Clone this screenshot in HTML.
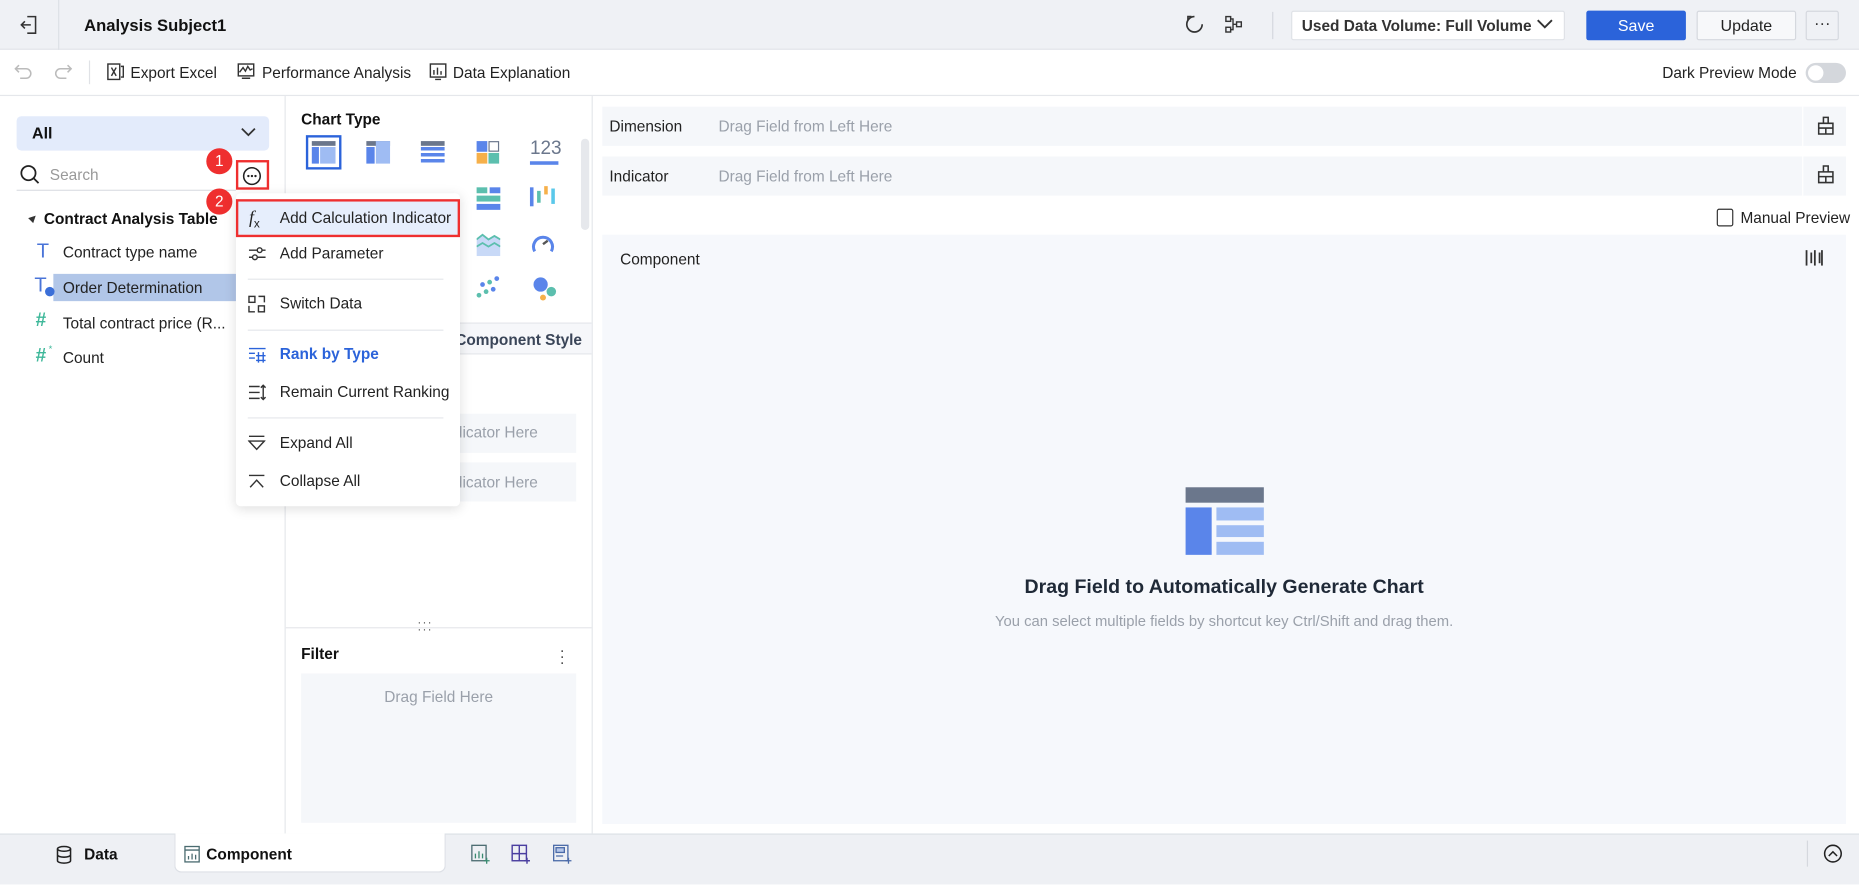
<!DOCTYPE html>
<html><head><meta charset="utf-8"><style>
*{box-sizing:border-box;margin:0;padding:0}
html,body{width:1859px;height:885px;overflow:hidden;background:#fff}
#w{width:1568px;height:746px;transform:scale(1.18559);transform-origin:0 0;position:relative;font-family:"Liberation Sans",sans-serif;font-size:13px;color:#1f2937}
.a{position:absolute}
.mi{position:absolute;left:0;width:189px;height:30px;line-height:30px;padding-left:37px;font-size:13px;color:#222}
.mi svg{position:absolute;left:10px;top:8px}
.sep{position:absolute;left:10px;width:165px;height:1px;background:#e5e7eb}
.fl{position:absolute;left:30px;font-size:13px;color:#222}
</style></head><body><div id="w">
<div class="a" style="left:0;top:0;width:1568px;height:42px;background:#eff1f5;border-bottom:1px solid #e2e5ea"></div>
<div class="a" style="left:49px;top:0;width:1px;height:42px;background:#dde0e6"></div>
<svg class="a" style="left:16px;top:12px" width="18" height="18" viewBox="0 0 18 18" fill="none" stroke="#333" stroke-width="1.3"><path d="M7 2h7v14H7M2 9h8M5 6l-3 3 3 3"/></svg>
<div class="a" style="left:71px;top:13px;font-weight:bold;font-size:14px;color:#111">Analysis Subject1</div>
<svg class="a" style="left:999px;top:12px" width="17" height="17" viewBox="0 0 17 17" fill="none" stroke="#333" stroke-width="1.4"><path d="M8.5 2a6.5 6.5 0 1 0 6.5 6.5"/><path d="M3 5l0-3 3 0"/></svg>
<svg class="a" style="left:1033px;top:13px" width="16" height="15" viewBox="0 0 16 15" fill="none" stroke="#333" stroke-width="1.2"><rect x="1" y="1" width="4" height="4"/><rect x="1" y="10" width="4" height="4"/><rect x="10" y="5.5" width="4" height="4"/><path d="M5 3h2v9H5M7 7.5h3"/></svg>
<div class="a" style="left:1073px;top:10px;width:1px;height:23px;background:#d5d8de"></div>
<div class="a" style="left:1089px;top:9px;width:231px;height:25px;background:#fff;border:1px solid #dfe2e7;border-radius:2px;font-size:13px;line-height:23px;padding-left:8px;color:#333;font-weight:bold">Used Data Volume: Full Volume</div>
<svg class="a" style="left:1296px;top:15px" width="14" height="10" viewBox="0 0 14 10" fill="none" stroke="#333" stroke-width="1.6"><path d="M1 2l6 6 6-6"/></svg>
<div class="a" style="left:1338px;top:9px;width:84px;height:25px;background:#2b63da;border-radius:2px;color:#fff;text-align:center;line-height:25px;font-size:13.5px">Save</div>
<div class="a" style="left:1431px;top:9px;width:84px;height:25px;background:#f7f8fa;border:1px solid #d5d8de;border-radius:2px;text-align:center;line-height:23px;font-size:13.5px;color:#222">Update</div>
<div class="a" style="left:1523px;top:9px;width:28px;height:25px;border:1px solid #d5d8de;border-radius:2px;text-align:center;line-height:18px;font-size:14px;color:#333">···</div>
<div class="a" style="left:0;top:80px;width:1568px;height:1px;background:#e5e7eb"></div>
<svg class="a" style="left:12px;top:53px" width="16" height="14" viewBox="0 0 16 14" fill="none" stroke="#bbb" stroke-width="1.3"><path d="M4 2L1 5l3 3M1 5h9a4 4 0 0 1 0 8H5"/></svg>
<svg class="a" style="left:45px;top:53px" width="16" height="14" viewBox="0 0 16 14" fill="none" stroke="#bbb" stroke-width="1.3"><path d="M12 2l3 3-3 3M15 5H6a4 4 0 0 0 0 8h5"/></svg>
<div class="a" style="left:75px;top:51px;width:1px;height:20px;background:#e0e2e6"></div>
<svg class="a" style="left:90px;top:53px" width="15" height="15" viewBox="0 0 15 15" fill="none" stroke="#333" stroke-width="1.2"><rect x="1" y="1" width="10" height="13"/><path d="M12 3h2v9h-2M4 4l4 7M8 4l-4 7"/></svg>
<div class="a" style="left:110px;top:54px;font-size:13px;color:#222">Export Excel</div>
<svg class="a" style="left:200px;top:53px" width="15" height="14" viewBox="0 0 15 14" fill="none" stroke="#333" stroke-width="1.2"><rect x="1" y="1" width="13" height="10"/><path d="M2 8l3-4 2 3 2-4 2 3 2-1M4 13h7"/></svg>
<div class="a" style="left:221px;top:54px;font-size:13px;color:#222">Performance Analysis</div>
<svg class="a" style="left:362px;top:53px" width="15" height="15" viewBox="0 0 15 15" fill="none" stroke="#333" stroke-width="1.2"><rect x="1" y="1" width="13" height="11"/><path d="M4 10V6M7 10V4M10 10V7M5 14h5"/></svg>
<div class="a" style="left:382px;top:54px;font-size:13px;color:#222">Data Explanation</div>
<div class="a" style="left:1402px;top:54px;font-size:13px;color:#222">Dark Preview Mode</div>
<div class="a" style="left:1523px;top:53px;width:34px;height:17px;border-radius:9px;background:#d4d7dc"></div>
<div class="a" style="left:1525px;top:55px;width:13px;height:13px;border-radius:50%;background:#fff"></div>
<div class="a" style="left:240px;top:81px;width:1px;height:622px;background:#e5e7eb"></div>
<div class="a" style="left:14px;top:98px;width:213px;height:29px;background:#e3ebfb;border-radius:4px;font-weight:bold;font-size:13.5px;line-height:29px;padding-left:13px;color:#111">All</div>
<svg class="a" style="left:203px;top:107px" width="13" height="9" viewBox="0 0 13 9" fill="none" stroke="#333" stroke-width="1.5"><path d="M1 1.5l5.5 5.5 5.5-5.5"/></svg>
<svg class="a" style="left:17px;top:139px" width="17" height="17" viewBox="0 0 17 17" fill="none" stroke="#222" stroke-width="1.5"><circle cx="7" cy="7" r="6"/><path d="M11.5 11.5l4 4"/></svg>
<div class="a" style="left:42px;top:140px;font-size:13px;color:#999">Search</div>
<div class="a" style="left:14px;top:160px;width:185px;height:1px;background:#dcdfe4"></div>
<div class="a" style="left:174px;top:125px;width:22px;height:22px;border-radius:50%;background:#ef2f2f;color:#fff;text-align:center;line-height:22px;font-size:13px">1</div>
<div class="a" style="left:199px;top:135px;width:28px;height:25px;border:2px solid #ef2f2f"></div>
<svg class="a" style="left:204px;top:140px" width="17" height="17" viewBox="0 0 17 17"><circle cx="8.5" cy="8.5" r="7" fill="none" stroke="#222" stroke-width="1.3"/><circle cx="5.5" cy="8.5" r="1" fill="#222"/><circle cx="8.5" cy="8.5" r="1" fill="#222"/><circle cx="11.5" cy="8.5" r="1" fill="#222"/></svg>
<div class="a" style="left:174px;top:159px;width:22px;height:22px;border-radius:50%;background:#ef2f2f;color:#fff;text-align:center;line-height:22px;font-size:13px">2</div>
<div class="a" style="left:25px;top:181px;width:0;height:0;border-left:3px solid transparent;border-right:3px solid transparent;border-bottom:6px solid #333;transform:rotate(45deg)"></div>
<div class="a" style="left:37px;top:177px;font-weight:bold;font-size:13px;color:#111">Contract Analysis Table</div>
<div class="a" style="left:31px;top:202px;font-size:17px;color:#4a74d8">T</div>
<div class="fl" style="left:53px;top:205px">Contract type name</div>
<div class="a" style="left:45px;top:231px;width:160px;height:23px;background:#b1c6e8"></div>
<div class="a" style="left:29px;top:231px;font-size:17px;color:#4a74d8">T</div>
<div class="a" style="left:38px;top:242px;width:8px;height:8px;border-radius:50%;background:#3b6fd8"></div>
<div class="fl" style="left:53px;top:235px">Order Determination</div>
<div class="a" style="left:30px;top:262px;font-size:16px;color:#3fb89a;font-weight:bold">#</div>
<div class="fl" style="left:53px;top:265px">Total contract price (R...</div>
<div class="a" style="left:30px;top:292px;font-size:16px;color:#3fb89a;font-weight:bold">#</div>
<div class="a" style="left:41px;top:290px;font-size:8px;color:#3fb89a">*</div>
<div class="fl" style="left:53px;top:294px">Count</div>
<div class="a" style="left:499px;top:81px;width:1px;height:622px;background:#e5e7eb"></div>
<div class="a" style="left:254px;top:93px;font-weight:bold;font-size:13px;color:#111">Chart Type</div>
<div class="a" style="left:490px;top:117px;width:7px;height:77px;border-radius:4px;background:#e6e8ec"></div>
<div class="a" style="left:258px;top:114px;width:30px;height:29px;border:2px solid #2b63da"></div>
<div class="a" style="left:263px;top:119px;width:20px;height:4px;background:#6b778c"></div>
<div class="a" style="left:263px;top:124px;width:6px;height:14px;background:#5a85ea"></div>
<div class="a" style="left:270px;top:124px;width:13px;height:14px;background:#9fbcf3"></div>
<div class="a" style="left:309px;top:119px;width:20px;height:4px;background:#6b778c"></div>
<div class="a" style="left:309px;top:124px;width:7px;height:14px;background:#5a85ea"></div>
<div class="a" style="left:317px;top:119px;width:12px;height:19px;background:#9fbcf3"></div>
<div class="a" style="left:355px;top:119px;width:20px;height:4px;background:#6b778c"></div>
<div class="a" style="left:355px;top:124px;width:20px;height:14px;background:repeating-linear-gradient(#5a85ea 0 3px,#fff 3px 5px)"></div>
<div class="a" style="left:402px;top:119px;width:9px;height:9px;background:#5a85ea"></div>
<div class="a" style="left:412px;top:119px;width:9px;height:9px;border:1.5px solid #6b778c"></div>
<div class="a" style="left:402px;top:129px;width:9px;height:9px;background:#f6b04a"></div>
<div class="a" style="left:412px;top:129px;width:9px;height:9px;background:#5cbfae"></div>
<div class="a" style="left:447px;top:117px;font-size:16px;color:#6b778c">123</div>
<div class="a" style="left:447px;top:136px;width:24px;height:3px;background:#5a85ea"></div>
<div class="a" style="left:402px;top:158px;width:9px;height:5px;background:#5cbfae"></div>
<div class="a" style="left:413px;top:158px;width:9px;height:5px;background:#5a85ea"></div>
<div class="a" style="left:402px;top:165px;width:20px;height:5px;background:#5cbfae"></div>
<div class="a" style="left:402px;top:172px;width:20px;height:5px;background:#5a85ea"></div>
<div class="a" style="left:447px;top:158px;width:3px;height:16px;background:#5a85ea"></div>
<div class="a" style="left:453px;top:161px;width:3px;height:10px;background:#5cbfae"></div>
<div class="a" style="left:459px;top:157px;width:3px;height:7px;background:#f6b04a"></div>
<div class="a" style="left:465px;top:159px;width:3px;height:13px;background:#5ac8ea"></div>
<svg class="a" style="left:402px;top:196px" width="20" height="20"><path d="M0 6l5-4 5 4 5-3 5 3v14H0z" fill="#c8d9f7"/><path d="M0 6l5-4 5 4 5-3 5 3M0 12l5-3 5 3 5-3 5 3" stroke="#5cbfae" stroke-width="1.5" fill="none"/></svg>
<svg class="a" style="left:447px;top:195px" width="22" height="22"><path d="M4 17A8 8 0 1 1 18 17" stroke="#5a85ea" stroke-width="2.5" fill="none"/><path d="M11 11l4-3" stroke="#555" stroke-width="2"/></svg>
<svg class="a" style="left:400px;top:232px" width="24" height="22"><circle cx="19" cy="3" r="2" fill="#5a85ea"/><circle cx="13" cy="6" r="2" fill="#5cbfae"/><circle cx="7" cy="8" r="2" fill="#5a85ea"/><circle cx="16" cy="12" r="2" fill="#5a85ea"/><circle cx="10" cy="14" r="2" fill="#5cbfae"/><circle cx="4" cy="17" r="2" fill="#5cbfae"/></svg>
<svg class="a" style="left:447px;top:232px" width="24" height="24"><circle cx="9" cy="8" r="6" fill="#5a85ea"/><circle cx="18" cy="14" r="4" fill="#5cbfae"/><circle cx="11" cy="19" r="2.5" fill="#f6b04a"/></svg>
<div class="a" style="left:241px;top:272px;width:258px;height:27px;background:#f6f7fa;border-top:1px solid #e5e7eb;border-bottom:1px solid #e5e7eb"></div>
<div class="a" style="left:384px;top:279px;font-weight:bold;font-size:13px;color:#3a4558">Component Style</div>
<div class="a" style="left:254px;top:349px;width:232px;height:33px;background:#f5f7fa"></div>
<div class="a" style="left:372px;top:357px;color:#9aa0aa;font-size:13px">Indicator Here</div>
<div class="a" style="left:254px;top:390px;width:232px;height:33px;background:#f5f7fa"></div>
<div class="a" style="left:372px;top:399px;color:#9aa0aa;font-size:13px">Indicator Here</div>
<div class="a" style="left:241px;top:529px;width:258px;height:1px;background:#e5e7eb"></div>
<div class="a" style="left:352px;top:523px;font-size:10px;letter-spacing:1px;color:#555;line-height:6px">···<br>···</div>
<div class="a" style="left:254px;top:544px;font-weight:bold;font-size:13px;color:#111">Filter</div>
<div class="a" style="left:472px;top:546px;font-size:13px;color:#444;line-height:5px">·<br>·<br>·</div>
<div class="a" style="left:254px;top:568px;width:232px;height:126px;background:#f5f7fa"></div>
<div class="a" style="left:254px;top:580px;width:232px;text-align:center;color:#9aa0aa;font-size:13px">Drag Field Here</div>
<div class="a" style="left:508px;top:90px;width:1049px;height:33px;background:#f5f7fa"></div>
<div class="a" style="left:1520px;top:90px;width:1px;height:33px;background:#fff"></div>
<div class="a" style="left:514px;top:99px;font-size:13px;color:#222">Dimension</div>
<div class="a" style="left:606px;top:99px;font-size:13px;color:#9aa0aa">Drag Field from Left Here</div>
<div class="a" style="left:508px;top:132px;width:1049px;height:33px;background:#f5f7fa"></div>
<div class="a" style="left:1520px;top:132px;width:1px;height:33px;background:#fff"></div>
<div class="a" style="left:514px;top:141px;font-size:13px;color:#222">Indicator</div>
<div class="a" style="left:606px;top:141px;font-size:13px;color:#9aa0aa">Drag Field from Left Here</div>
<svg class="a" style="left:1533px;top:98px" width="14" height="16" viewBox="0 0 14 16" fill="none" stroke="#333" stroke-width="1.3"><path d="M5 1h4v5H5zM1 6h12v9H1zM1 10h12M7 10v5"/></svg>
<svg class="a" style="left:1533px;top:139px" width="14" height="16" viewBox="0 0 14 16" fill="none" stroke="#333" stroke-width="1.3"><path d="M5 1h4v5H5zM1 6h12v9H1zM1 10h12M7 10v5"/></svg>
<div class="a" style="left:1448px;top:176px;width:14px;height:15px;border:1.3px solid #333;border-radius:2px"></div>
<div class="a" style="left:1468px;top:176px;font-size:13px;color:#222">Manual Preview</div>
<div class="a" style="left:508px;top:198px;width:1049px;height:497px;background:#f6f8fc"></div>
<div class="a" style="left:523px;top:211px;font-size:13px;color:#222">Component</div>
<svg class="a" style="left:1522px;top:210px" width="16" height="15" fill="#333"><rect x="1" y="1" width="1.5" height="13"/><rect x="5" y="3" width="1.5" height="9"/><rect x="8" y="1" width="1.5" height="13"/><rect x="12" y="3" width="1.5" height="9"/><rect x="14" y="1" width="1.5" height="13"/></svg>
<div class="a" style="left:1000px;top:411px;width:66px;height:13px;background:#6b778c"></div>
<div class="a" style="left:1000px;top:428px;width:22px;height:40px;background:#5a85ea"></div>
<div class="a" style="left:1026px;top:428px;width:40px;height:11px;background:#9fbcf3"></div>
<div class="a" style="left:1026px;top:443px;width:40px;height:10px;background:#9fbcf3"></div>
<div class="a" style="left:1026px;top:457px;width:40px;height:11px;background:#9fbcf3"></div>
<div class="a" style="left:508px;top:486px;width:1049px;text-align:center;font-weight:bold;font-size:16.5px;color:#1f2937">Drag Field to Automatically Generate Chart</div>
<div class="a" style="left:508px;top:517px;width:1049px;text-align:center;font-size:12.5px;color:#9aa0aa">You can select multiple fields by shortcut key Ctrl/Shift and drag them.</div>
<div class="a" style="left:0;top:703px;width:1568px;height:43px;background:#eef0f4;border-top:1px solid #dde0e6"></div>
<div class="a" style="left:147px;top:703px;width:229px;height:33px;background:#fff;border:1px solid #dde0e6;border-top:none;border-radius:0 0 6px 6px"></div>
<svg class="a" style="left:47px;top:713px" width="14" height="16" viewBox="0 0 14 16" fill="none" stroke="#222" stroke-width="1.3"><ellipse cx="7" cy="3" rx="5.5" ry="2"/><path d="M1.5 3v10c0 1.1 2.5 2 5.5 2s5.5-.9 5.5-2V3M1.5 8c0 1.1 2.5 2 5.5 2s5.5-.9 5.5-2"/></svg>
<div class="a" style="left:71px;top:713px;font-weight:bold;font-size:13px;color:#111">Data</div>
<svg class="a" style="left:155px;top:713px" width="14" height="15" fill="none" stroke="#4a6b70" stroke-width="1.1"><rect x="1" y="1" width="12" height="13"/><path d="M1 4h12M4 12V9M7 12V7M10 12V8"/></svg>
<div class="a" style="left:174px;top:713px;font-weight:bold;font-size:13px;color:#111">Component</div>
<svg class="a" style="left:397px;top:712px" width="17" height="17" fill="none" stroke="#4a6b70" stroke-width="1.1"><rect x="1" y="1" width="12" height="13"/><path d="M4 12V8M7 12V6M10 12V8M11 14h5M13.5 11.5v5" stroke="#3a8a70"/></svg>
<svg class="a" style="left:431px;top:712px" width="17" height="17" fill="none" stroke="#4b3fa0" stroke-width="1.2"><rect x="1" y="1" width="12" height="13"/><path d="M7 1v13M1 8h12M11 14h5M13.5 11.5v5"/></svg>
<svg class="a" style="left:466px;top:712px" width="17" height="17" fill="none" stroke="#4a6aa8" stroke-width="1.1"><rect x="1" y="1" width="12" height="13"/><rect x="3" y="3" width="7" height="4" fill="#b5c7ea"/><path d="M3 10h6M11 14h5M13.5 11.5v5"/></svg>
<div class="a" style="left:1524px;top:709px;width:1px;height:22px;background:#d5d8de"></div>
<svg class="a" style="left:1538px;top:712px" width="16" height="16" fill="none" stroke="#222" stroke-width="1.3"><circle cx="8" cy="8" r="7"/><path d="M4.5 10l3.5-3.5 3.5 3.5"/></svg>
<div class="a" style="left:199px;top:163px;width:189px;height:264px;background:#fff;border-radius:4px;box-shadow:0 2px 10px rgba(0,0,0,.13)">
<div class="mi" style="top:5px;background:#e6eefc;border:2px solid #ef2f2f;height:32px;line-height:28px;padding-left:35px"><span class="a" style="left:9px;top:0;font-style:italic;font-family:'Liberation Serif',serif;font-size:15px">f<sub style="font-size:10px;font-style:normal;font-family:'Liberation Sans'">x</sub></span>Add Calculation Indicator</div>
<div class="mi" style="top:36px"><svg width="16" height="14" fill="none" stroke="#333" stroke-width="1.2"><path d="M1 4h14M1 10h14"/><circle cx="10" cy="4" r="2" fill="#fff"/><circle cx="6" cy="10" r="2" fill="#fff"/></svg>Add Parameter</div>
<div class="sep" style="top:72px"></div>
<div class="mi" style="top:78px"><svg width="15" height="15" fill="none" stroke="#333" stroke-width="1.2"><rect x="1" y="1" width="5" height="5"/><rect x="9" y="9" width="5" height="5"/><path d="M1 9v5h5M9 1h5v5"/></svg>Switch Data</div>
<div class="sep" style="top:115px"></div>
<div class="mi" style="top:121px;color:#2b63da;font-weight:bold"><svg width="16" height="14" fill="none" stroke="#2b63da" stroke-width="1.2"><path d="M1 2h14M1 6h5M1 10h5M9 5v9M13 5v9M7 8h8M7 12h8"/></svg>Rank by Type</div>
<div class="mi" style="top:153px"><svg width="16" height="14" fill="none" stroke="#333" stroke-width="1.2"><path d="M1 2h9M1 7h9M1 12h9M13 1v12M11 3l2-2 2 2M11 11l2 2 2-2"/></svg>Remain Current Ranking</div>
<div class="sep" style="top:189px"></div>
<div class="mi" style="top:196px"><svg width="15" height="14" fill="none" stroke="#333" stroke-width="1.2"><path d="M1 1h13M1 5h13L7.5 12z"/></svg>Expand All</div>
<div class="mi" style="top:228px"><svg width="15" height="14" fill="none" stroke="#333" stroke-width="1.2"><path d="M1 2h13M2 12l5.5-6 5.5 6"/></svg>Collapse All</div>
</div>
</div></body></html>
